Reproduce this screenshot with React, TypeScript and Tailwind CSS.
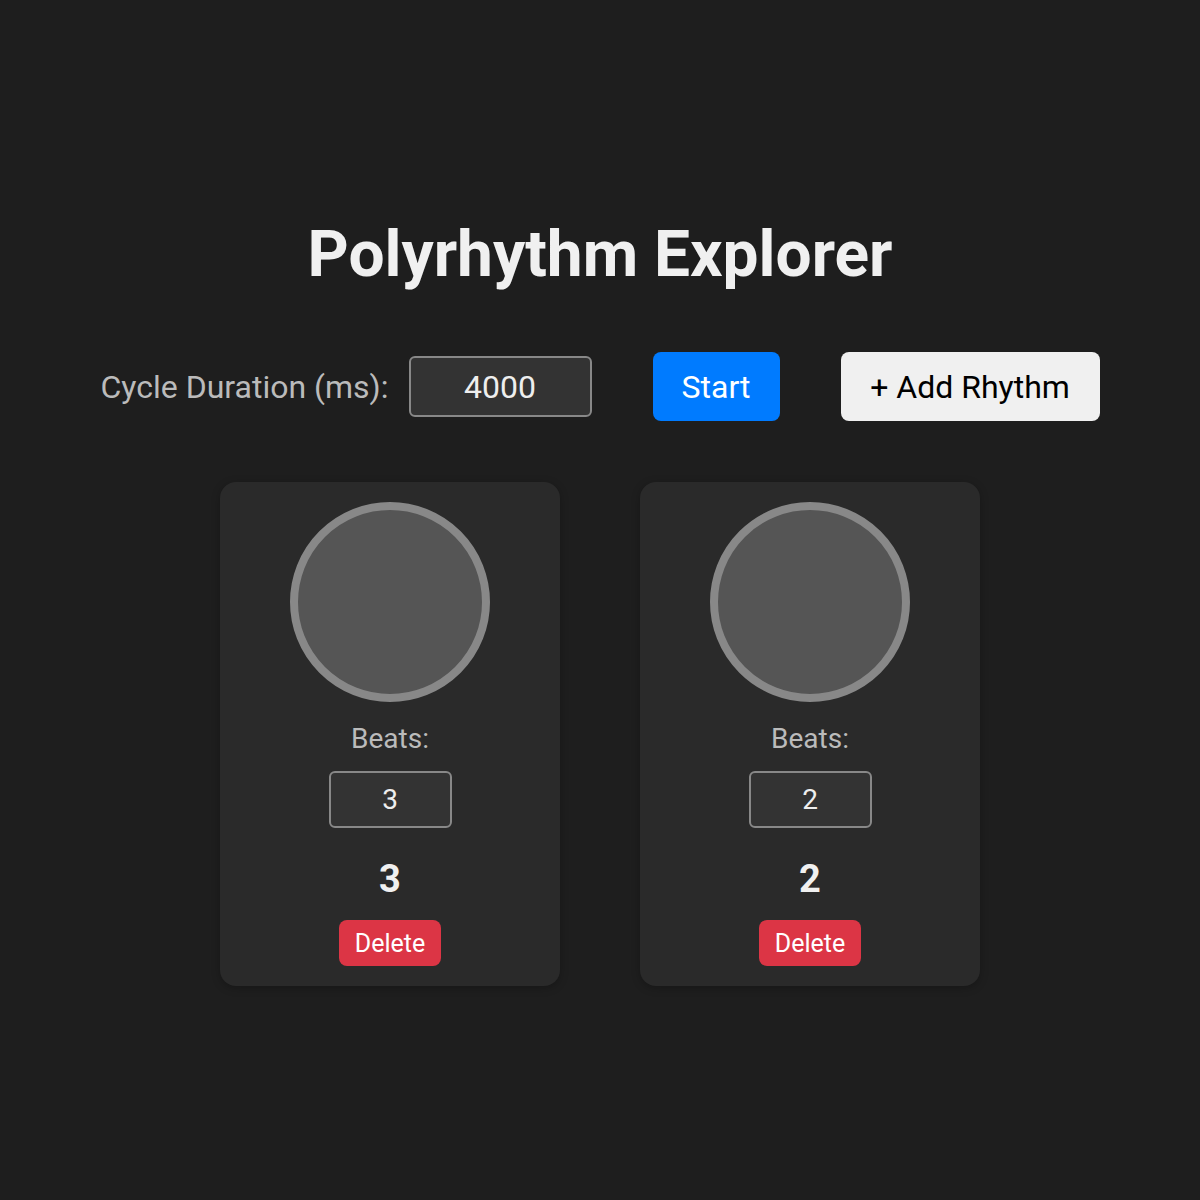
import { useState } from "react";

type Rhythm = { id: number; beats: number };

const RhythmCard = ({
  rhythm,
  onChange,
  onDelete,
}: {
  rhythm: Rhythm;
  onChange: (beats: number) => void;
  onDelete: () => void;
}) => (
  <div className="w-[340px] h-[504px] bg-[#2a2a2a] rounded-2xl shadow-[0_2px_8px_rgba(0,0,0,0.25)] pt-[20px] pb-[20px] flex flex-col items-center">
    {/* circle */}
    <div className="w-[200px] h-[200px] rounded-full bg-[#555555] border-[8px] border-[#888888]" />
    <label className="mt-[20px] text-[28px] leading-[33px] text-[#bbbbbb]">
      Beats:
    </label>
    <input
      type="number"
      value={rhythm.beats}
      onChange={(e) => onChange(Number(e.target.value))}
      className="mt-[16px] w-[123px] h-[57px] bg-[#333333] border-2 border-[#888888] rounded-md text-center text-[28px] text-[#eeeeee] focus:outline-none [appearance:textfield] [&::-webkit-inner-spin-button]:appearance-none"
    />
    <div className="mt-[29px] text-[38px] leading-[44px] font-bold text-[#f0f0f0]">
      {rhythm.beats}
    </div>
    <button
      onClick={onDelete}
      className="mt-[19px] h-[46px] px-4 bg-[#dc3545] rounded-lg text-[25px] leading-[29px] text-white"
    >
      Delete
    </button>
  </div>
);

export default function App() {
  const [duration, setDuration] = useState("4000");
  const [rhythms, setRhythms] = useState<Rhythm[]>([
    { id: 1, beats: 3 },
    { id: 2, beats: 2 },
  ]);

  return (
    <div className="min-h-screen bg-[#1e1e1e] flex flex-col items-center pt-[217px] font-['Roboto',sans-serif]">
      <h1 className="text-[64px] leading-[75px] font-bold text-[#f0f0f0]">
        Polyrhythm Explorer
      </h1>

      <div className="mt-[60px] h-[69px] flex items-center">
        <label className="text-[32px] text-[#bbbbbb] mr-[20px]">
          Cycle Duration (ms):
        </label>
        <input
          type="text"
          value={duration}
          onChange={(e) => setDuration(e.target.value)}
          className="w-[183px] h-[61px] bg-[#333333] border-2 border-[#888888] rounded-md text-center text-[32px] text-[#eeeeee] focus:outline-none"
        />
        <button className="ml-[61px] h-[69px] w-[127px] bg-[#007bff] rounded-lg text-[32px] text-white">
          Start
        </button>
        <button
          onClick={() =>
            setRhythms([...rhythms, { id: Date.now(), beats: 4 }])
          }
          className="ml-[61px] h-[69px] w-[259px] bg-[#f0f0f0] rounded-lg text-[32px] text-black"
        >
          + Add Rhythm
        </button>
      </div>

      <div className="mt-[61px] flex gap-[80px]">
        {rhythms.map((r) => (
          <RhythmCard
            key={r.id}
            rhythm={r}
            onChange={(beats) =>
              setRhythms(
                rhythms.map((x) => (x.id === r.id ? { ...x, beats } : x)),
              )
            }
            onDelete={() => setRhythms(rhythms.filter((x) => x.id !== r.id))}
          />
        ))}
      </div>
    </div>
  );
}
